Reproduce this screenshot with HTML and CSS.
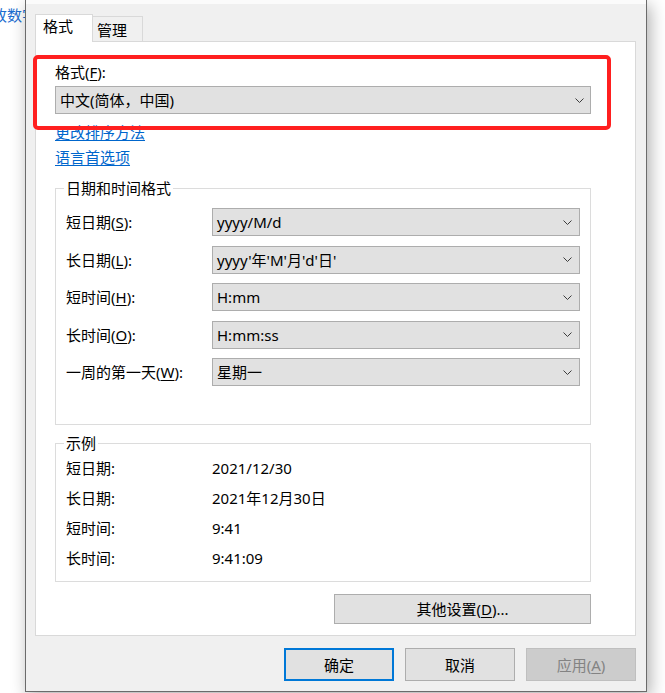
FILE: index.html
```html
<!DOCTYPE html>
<html lang="zh-CN">
<head>
<meta charset="utf-8">
<title>区域</title>
<link rel="stylesheet" href="styles.css">
</head>
<body>
<div class="behind">改数字</div>
<div class="dialog">
  <div class="titlebar"></div>
  <div class="dlg-body">
    <div class="tabs">
      <div class="tab active">格式</div>
      <div class="tab">管理</div>
    </div>
    <div class="panel">
      <div class="field-label">格式(<u>F</u>):</div>
      <div class="combo wide"><span>中文(简体，中国)</span><svg class="chev" width="9" height="5" viewBox="0 0 9 5"><path d="M0.5 0.5 L4.5 4.5 L8.5 0.5"/></svg></div>
      <a class="link first" href="#">更改排序方法</a>
      <a class="link" href="#">语言首选项</a>
      <fieldset class="group formats">
        <legend>日期和时间格式</legend>
        <div class="fmt-grid">
          <div class="lbl">短日期(<u>S</u>):</div>
          <div class="combo"><span>yyyy/M/d</span><svg class="chev" width="9" height="5" viewBox="0 0 9 5"><path d="M0.5 0.5 L4.5 4.5 L8.5 0.5"/></svg></div>
          <div class="lbl">长日期(<u>L</u>):</div>
          <div class="combo"><span>yyyy'年'M'月'd'日'</span><svg class="chev" width="9" height="5" viewBox="0 0 9 5"><path d="M0.5 0.5 L4.5 4.5 L8.5 0.5"/></svg></div>
          <div class="lbl">短时间(<u>H</u>):</div>
          <div class="combo"><span>H:mm</span><svg class="chev" width="9" height="5" viewBox="0 0 9 5"><path d="M0.5 0.5 L4.5 4.5 L8.5 0.5"/></svg></div>
          <div class="lbl">长时间(<u>O</u>):</div>
          <div class="combo"><span>H:mm:ss</span><svg class="chev" width="9" height="5" viewBox="0 0 9 5"><path d="M0.5 0.5 L4.5 4.5 L8.5 0.5"/></svg></div>
          <div class="lbl">一周的第一天(<u>W</u>):</div>
          <div class="combo"><span>星期一</span><svg class="chev" width="9" height="5" viewBox="0 0 9 5"><path d="M0.5 0.5 L4.5 4.5 L8.5 0.5"/></svg></div>
        </div>
      </fieldset>
      <fieldset class="group sample">
        <legend>示例</legend>
        <div class="sample-grid">
          <div>短日期:</div><div>2021/12/30</div>
          <div>长日期:</div><div>2021年12月30日</div>
          <div>短时间:</div><div>9:41</div>
          <div>长时间:</div><div>9:41:09</div>
        </div>
      </fieldset>
      <div class="more-row"><button class="btn more">其他设置(<u>D</u>)...</button></div>
    </div>
    <div class="actions">
      <button class="btn primary">确定</button>
      <button class="btn">取消</button>
      <button class="btn disabled">应用(<u>A</u>)</button>
    </div>
  </div>
</div>
<div class="highlight"></div>
</body>
</html>
```

FILE: styles.css
```css
* { box-sizing: border-box; }

html, body {
  margin: 0;
  padding: 0;
}

body {
  width: 665px;
  height: 693px;
  overflow: hidden;
  position: relative;
  background: #ffffff;
  font-family: "Noto Sans", "Noto Sans CJK SC", sans-serif;
  font-size: 15px;
  line-height: 20px;
  color: #000;
}

u { text-decoration-thickness: 1px; text-underline-offset: 2px; }

.behind {
  position: absolute;
  left: -8px;
  top: 5px;
  color: #1c6dd0;
  white-space: nowrap;
}

.dialog {
  position: absolute;
  left: 25px;
  top: 0;
  width: 622px;
  height: 692px;
  background: #f0f0f0;
  border: 1px solid #6b6b6b;
  border-top: none;
  box-shadow: 3px 5px 16px rgba(0, 0, 0, 0.32);
}

.titlebar {
  height: 4px;
  background: #fbfbfb;
}

.dlg-body {
  padding-top: 10px;
}

.tabs {
  display: flex;
  align-items: flex-end;
  height: 27px;
  margin-left: 9px;
}

.tab {
  border: 1px solid #d9d9d9;
  border-bottom: none;
  background: #f0f0f0;
  height: 25px;
  width: 50px;
  padding: 3px 0 0 4px;
  border-left: none;
  white-space: nowrap;
}

.tab.active {
  position: relative;
  z-index: 2;
  background: #ffffff;
  height: 28px;
  width: 58px;
  margin-bottom: -1px;
  padding: 1px 0 0 7px;
  border-left: 1px solid #d9d9d9;
}

.panel {
  position: relative;
  z-index: 1;
  margin-left: 9px;
  width: 601px;
  height: 595px;
  background: #ffffff;
  border: 1px solid #d9d9d9;
  padding: 20px 44px 0 19px;
}

.field-label { height: 20px; }

.combo {
  display: flex;
  align-items: center;
  justify-content: space-between;
  height: 28px;
  background: #e1e1e1;
  border: 1px solid #adadad;
  padding: 0 7px 0 4px;
  white-space: nowrap;
}

.combo.wide { margin-top: 4px; width: 536px; padding-right: 6px; }

.chev { flex: none; }
.chev path { fill: none; stroke: #3c3c3c; stroke-width: 1; }

.link {
  display: block;
  width: max-content;
  margin-top: 5px;
  color: #0066cc;
  text-decoration: underline;
  text-decoration-thickness: 1px;
  text-underline-offset: 2px;
}

.link.first { margin-top: 8px; }

.group {
  margin: 0;
  min-width: 0;
  border: 1px solid #dcdcdc;
}

.group legend {
  padding: 0 2px;
  margin-left: -2px;
  line-height: 20px;
}

.formats {
  margin-top: 11px;
  padding: 10px 10px 38px 10px;
}

.fmt-grid {
  display: grid;
  grid-template-columns: 146px 1fr;
  grid-auto-rows: 28px;
  row-gap: 9.5px;
  align-items: center;
}

.lbl { white-space: nowrap; }

.sample {
  margin-top: 8px;
  padding: 0 10px 8px 10px;
}

.sample-grid {
  display: grid;
  grid-template-columns: 146px 1fr;
  grid-auto-rows: 30px;
  line-height: 30px;
}

.more-row {
  display: flex;
  justify-content: flex-end;
  margin-top: 12px;
}

.btn {
  font: inherit;
  color: #000;
  background: #e1e1e1;
  border: 1px solid #adadad;
  border-radius: 0;
  padding: 0;
  margin: 0;
  text-align: center;
}

.btn.more { width: 257px; height: 30px; }

.actions {
  display: flex;
  justify-content: flex-end;
  gap: 11px;
  margin-top: 12px;
  padding-right: 10px;
}

.actions .btn { width: 110px; height: 33px; }

.btn.primary { border: 2px solid #0078d7; }

.btn.disabled {
  background: #cccccc;
  border-color: #bfbfbf;
  color: #838383;
}

.highlight {
  position: absolute;
  left: 33px;
  top: 55px;
  width: 578px;
  height: 75px;
  border: 4px solid #ff1f1f;
  border-radius: 5px;
  z-index: 5;
}
```
